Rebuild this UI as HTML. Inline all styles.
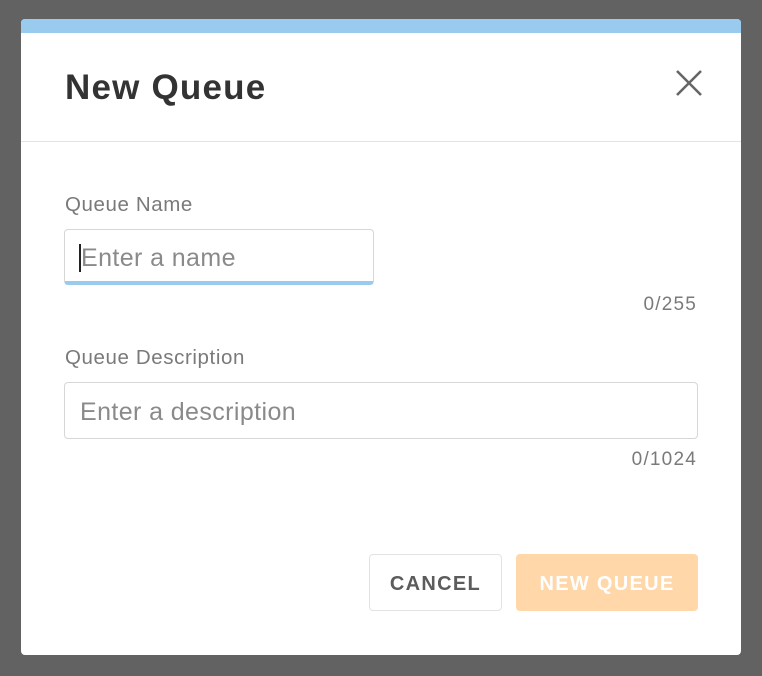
<!DOCTYPE html>
<html><head><style>
body{margin:0;width:762px;height:676px;background:#626262;font-family:"Liberation Sans",sans-serif;position:relative;overflow:hidden}
.d{position:absolute;left:21px;top:19px;width:720px;height:636px;background:#fff;border-radius:4px;overflow:hidden}
.bar{height:14px;background:#99cbee}
.t{position:absolute;left:44px;top:49px;font-size:35px;color:#333;font-weight:bold;letter-spacing:1.2px}
.hr{position:absolute;left:0;right:0;top:122px;height:1px;background:#e3e3e3}
.x{position:absolute;left:655px;top:51px}
.l{position:absolute;left:44px;font-size:20.5px;color:#7a7a7a;letter-spacing:0.6px}
.in{position:absolute;left:43px;border:1px solid #d6d6d6;border-radius:4px;box-sizing:border-box;font-size:25px;color:#8a8a8a;padding-left:15px;letter-spacing:0.4px}
.c{position:absolute;right:44px;font-size:19px;color:#7a7a7a;letter-spacing:1.2px}
.b{position:absolute;top:535px;height:57px;border-radius:4px;box-sizing:border-box;font-size:20px;letter-spacing:1.3px;display:flex;align-items:center;justify-content:center;font-weight:bold;padding-top:3px}
</style></head><body>
<div class="d">
<div class="bar"></div>
<div class="t">New Queue</div>
<svg class="x" width="26" height="26" viewBox="0 0 26 26"><path d="M1 1L25 25M25 1L1 25" stroke="#666" stroke-width="2.6"/></svg>
<div class="hr"></div>
<div class="l" style="top:174px">Queue Name</div>
<div class="in" style="top:210px;width:310px;height:56px;line-height:56px;border-bottom:4px solid #99cbee"><span style="border-left:2px solid #222;margin-left:-1px;padding-left:0">Enter a name</span></div>
<div class="c" style="top:275px">0/255</div>
<div class="l" style="top:327px">Queue Description</div>
<div class="in" style="top:363px;width:634px;height:57px;line-height:58px">Enter a description</div>
<div class="c" style="top:430px">0/1024</div>
<div class="b" style="left:348px;width:133px;border:1px solid #e3e3e3;color:#5c5c5c">CANCEL</div>
<div class="b" style="left:495px;width:182px;background:#ffd7a8;color:#fff">NEW QUEUE</div>
</div>
</body></html>
